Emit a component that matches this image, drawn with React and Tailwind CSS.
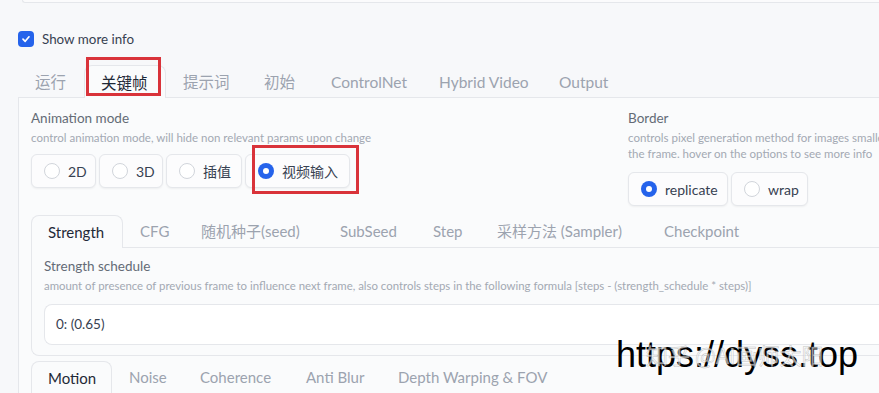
import React from "react";

const FONT = { fontFamily: "Lato, 'Noto Sans CJK SC', sans-serif" };

function Radio({ label, checked, className = "" }) {
  return (
    <div
      className={`flex items-center shrink-0 whitespace-nowrap h-[34px] pl-[12px] gap-[8px] border border-[#e5e7eb] rounded-[6px] bg-[#fcfcfd] shadow-[0_1px_2px_rgba(0,0,0,0.05)] text-[14px] text-[#374151] ${className}`}
    >
      {checked ? (
        <span className="w-[16px] h-[16px] shrink-0 rounded-full bg-[#2563eb] flex items-center justify-center">
          <span className="w-[6px] h-[6px] rounded-full bg-white" />
        </span>
      ) : (
        <span className="w-[16px] h-[16px] shrink-0 rounded-full border border-[#d1d5db] bg-white" />
      )}
      <span>{label}</span>
    </div>
  );
}

function TabRow({ tabs, active, size, pad = "" }) {
  return (
    <div className="flex items-end">
      {tabs.map(([t, w], i) =>
        i === active ? (
          <div
            key={t}
            className={`relative -mb-px pl-4 h-[33px] shrink-0 whitespace-nowrap flex items-center border border-b-0 border-[#e5e7eb] rounded-t-[8px] bg-[#fafbfc] text-[#1f2937] ${size} ${w} ${pad}`}
          >
            {t}
          </div>
        ) : (
          <div
            key={t}
            className={`pl-4 h-[32px] shrink-0 whitespace-nowrap flex items-center border border-transparent text-[#9ca3af] ${size} ${w} ${pad}`}
          >
            {t}
          </div>
        )
      )}
    </div>
  );
}

export default function App() {
  return (
    <div
      className="relative w-[879px] h-[393px] overflow-hidden bg-[#f7f8fa]"
      style={FONT}
    >
      {/* top card remnant */}
      <div className="ml-[22px] h-[3px] bg-[#fbfbfc] border-b border-l border-[#e5e7eb] rounded-bl-[6px]" />

      {/* checkbox */}
      <div className="flex items-center pl-[18px] mt-[28px] h-[16px] gap-[8px]">
        <span className="w-[16px] h-[16px] rounded-[4px] bg-[#2563eb] flex items-center justify-center">
          <svg width="10" height="10" viewBox="0 0 10 10">
            <path d="M2 5.2 L4.2 7.3 L8 2.8" fill="none" stroke="white" strokeWidth="1.7" strokeLinecap="round" strokeLinejoin="round" />
          </svg>
        </span>
        <span className="text-[13.4px] text-[#374151]">Show more info</span>
      </div>

      {/* main tabs */}
      <div className="ml-[18px] mt-[18px]">
        <TabRow
          tabs={[
            ["运行", "w-[66px]"],
            ["关键帧", "w-[82px]"],
            ["提示词", "w-[81px]"],
            ["初始", "w-[67px]"],
            ["ControlNet", "w-[108px]"],
            ["Hybrid Video", "w-[120px]"],
            ["Output", "w-[90px]"],
          ]}
          active={1}
          size="text-[15.5px]"
          pad="pt-[3px]"
        />
        <div className="border-t border-l border-[#e5e7eb] bg-[#fafbfc] pl-[12px] pt-[10px]">
          <div className="flex gap-[12px]">
            <div className="w-[585px] shrink-0">
              <div className="text-[13.5px] leading-[20px] text-[#646b76]">Animation mode</div>
              <div className="text-[11.5px] leading-[16px] text-[#a3a9b3] mt-[2px] whitespace-nowrap">
                control animation mode, will hide non relevant params upon change
              </div>
              <div className="flex gap-[3px] mt-[8px]">
                <Radio label="2D" className="w-[65px]" />
                <Radio label="3D" className="w-[64px]" />
                <Radio label="插值" className="w-[76px]" />
                <Radio label="视频输入" checked className="w-[105px]" />
              </div>
            </div>
            <div className="shrink-0 w-[300px]">
              <div className="text-[13.5px] leading-[20px] text-[#646b76]">Border</div>
              <div className="text-[11.5px] leading-[16px] text-[#a3a9b3] mt-[2px] whitespace-nowrap">
                controls pixel generation method for images smaller than
                <br />
                the frame. hover on the options to see more info
              </div>
              <div className="flex gap-[3px] mt-[10px]">
                <Radio label="replicate" checked className="w-[100px]" />
                <Radio label="wrap" className="w-[77px]" />
              </div>
            </div>
          </div>

          {/* strength tabs */}
          <div className="mt-[9px]">
            <TabRow
              tabs={[
                ["Strength", "w-[92px]"],
                ["CFG", "w-[61px]"],
                ["随机种子(seed)", "w-[139px]"],
                ["SubSeed", "w-[93px]"],
                ["Step", "w-[64px]"],
                ["采样方法 (Sampler)", "w-[167px]"],
                ["Checkpoint", "w-[110px]"],
              ]}
              active={0}
              size="text-[15px]"
            />
            <div className="border-t border-l border-b border-[#e5e7eb] rounded-bl-[8px] bg-[#fafbfc] pl-[12px] pt-[8px] pb-[10px]">
              <div className="text-[13.5px] leading-[20px] text-[#646b76]">Strength schedule</div>
              <div className="text-[11.4px] leading-[16px] text-[#a3a9b3] mt-[2px] whitespace-nowrap">
                amount of presence of previous frame to influence next frame, also controls steps in the following formula [steps - (strength_schedule * steps)]
              </div>
              <div className="mt-[10px] h-[41px] bg-white border border-r-0 border-[#e5e7eb] rounded-l-[8px] flex items-center pl-[11px] text-[13.5px] text-[#374151]">
                0: (0.65)
              </div>
            </div>
          </div>

          {/* motion tabs */}
          <div className="mt-[5px]">
            <TabRow
              tabs={[
                ["Motion", "w-[81px]"],
                ["Noise", "w-[71px]"],
                ["Coherence", "w-[106px]"],
                ["Anti Blur", "w-[92px]"],
                ["Depth Warping & FOV", "w-[180px]"],
              ]}
              active={0}
              size="text-[15px]"
            />
          </div>
        </div>
      </div>

      {/* red annotation boxes */}
      <div className="absolute left-[86px] top-[57px] w-[75px] h-[39px] border-[3px] border-[#d9333a] pointer-events-none" />
      <div className="absolute left-[252px] top-[145px] w-[107px] h-[49px] border-[3px] border-[#d9333a] pointer-events-none" />

      {/* watermark */}
      <div
        className="absolute left-[616px] top-[333px] text-[36px] leading-[44px] text-black pointer-events-none whitespace-nowrap"
        style={{ fontFamily: "'Liberation Sans', Arial, sans-serif" }}
      >
        https://dyss.top
      </div>
      <div
        className="absolute left-[646px] top-[340px] text-[22px] leading-[28px] text-white/60 pointer-events-none whitespace-nowrap"
        style={{ fontFamily: "'Noto Sans CJK SC', sans-serif", WebkitTextStroke: "0.5px rgba(150,150,150,0.6)" }}
      >
        知乎 @AI画师太阳
      </div>
    </div>
  );
}
